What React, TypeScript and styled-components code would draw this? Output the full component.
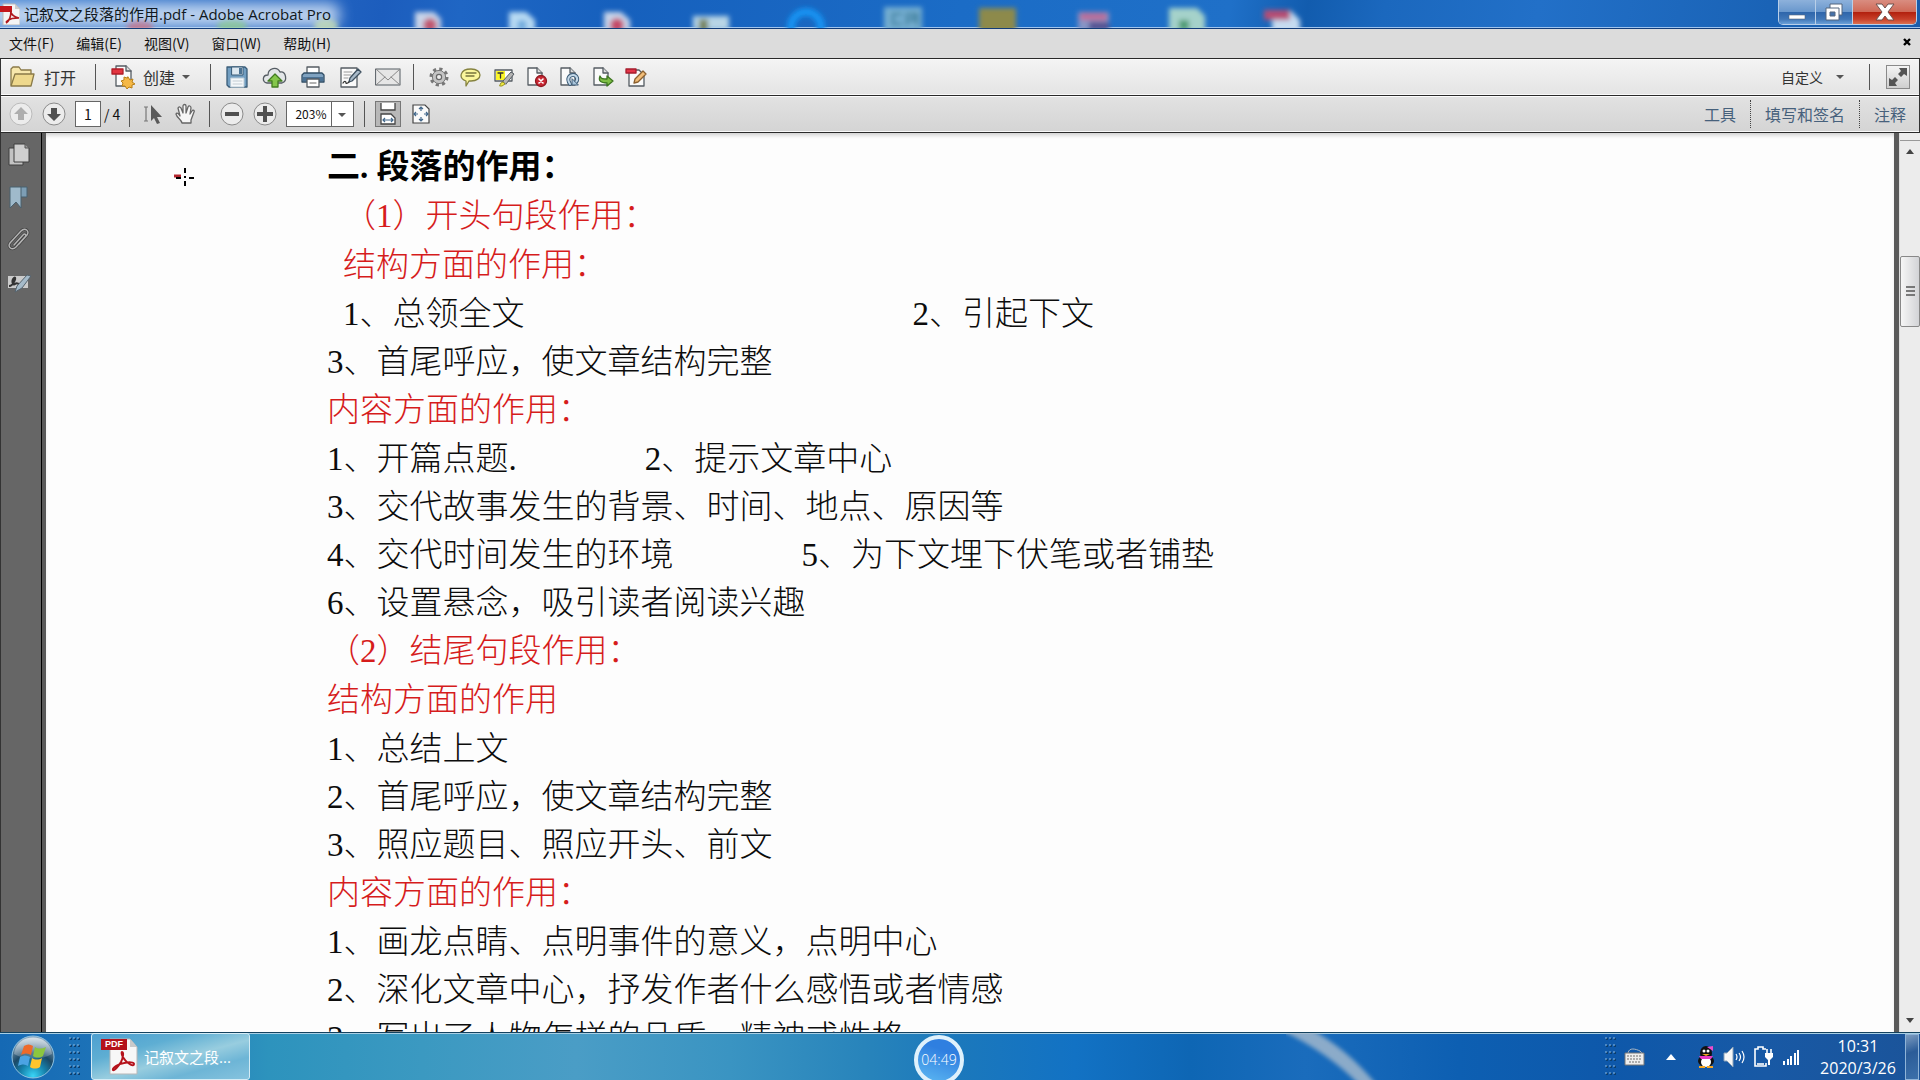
import React from 'react';
import styled, { createGlobalStyle, css } from 'styled-components';

const uiFont = `"Open Sans", "Noto Sans CJK SC", sans-serif`;
const cjkFont = `"Noto Sans CJK SC", sans-serif`;

const GlobalStyle = createGlobalStyle`
  *, *::before, *::after { box-sizing: border-box; }
  body { margin: 0; font-family: ${uiFont}; background: #666; overflow: hidden; }
  button, input, select { font: inherit; color: inherit; margin: 0; padding: 0; border: 0; background: none; }
  h1, h2, p { margin: 0; font-weight: inherit; }
  svg { display: block; flex: none; }
`;

const Desktop = styled.div`
  display: flex;
  flex-direction: column;
  height: 100vh;
`;

/* ---------- title bar ---------- */

const TitleBar = styled.header`
  position: relative;
  display: flex;
  justify-content: space-between;
  height: 29px;
  flex: none;
  overflow: hidden;
  border-bottom: 1px solid #123c78;
  box-shadow: inset 0 -1px 0 #9fc4ee;
  background: linear-gradient(100deg, #3f7fd0 0%, #1c5dbd 20%, #1f66c4 24%, #1660bd 32%, #1b6cc6 50%, #1f70c8 64%, #125cae 68%, #1b68be 72%, #2270c8 80%, #1a63b6 92%, #1a5caa 100%);
`;

const Wallpaper = styled.svg`
  position: absolute;
  left: 0;
  top: 0;
`;

const TitleText = styled.div`
  position: relative;
  display: flex;
  align-items: center;
  gap: 4px;
  height: 28px;
`;

const TitleLabel = styled.h1`
  font-size: 15px;
  line-height: 24px;
  color: #101820;
  white-space: pre;
`;

const WindowButtons = styled.div`
  position: relative;
  display: flex;
  height: 25px;
  margin-right: 3px;
  border: 1px solid #b9cfe8;
  border-top: 0;
  border-radius: 0 0 5px 5px;
  overflow: hidden;
`;

const WindowButton = styled.button<{ $close?: boolean }>`
  display: flex;
  align-items: center;
  justify-content: center;
  width: ${p => (p.$close ? 63 : 37)}px;
  border-right: 1px solid #b9cfe8;
  background: ${p =>
    p.$close
      ? 'linear-gradient(#d98d80 0%, #cf6a58 48%, #b3210f 52%, #c8402a 80%, #dc7050 100%)'
      : 'linear-gradient(#8db1db 0%, #6a98cd 48%, #2f66ab 52%, #4077b8 80%, #6ba0d8 100%)'};
  &:last-child { border-right: 0; }
`;

/* ---------- menu and tool bars ---------- */

const MenuBar = styled.nav`
  display: flex;
  align-items: center;
  height: 30px;
  flex: none;
  padding: 0 8px 2px 9px;
  gap: 22px;
  background: #dcdcdc;
  border-bottom: 1px solid #2a2a2a;
  font-family: ${cjkFont};
  font-size: 14px;
  line-height: 20px;
  color: #111;
`;

const CloseDocument = styled.button`
  margin-left: auto;
`;

const Bar = styled.div<{ $lower?: boolean }>`
  display: flex;
  align-items: center;
  justify-content: space-between;
  height: 37px;
  flex: none;
  border-left: 1px solid #333;
  border-right: 1px solid #333;
  border-bottom: 1px solid #2a2a2a;
  box-shadow: inset 0 1px 0 #fdfdfd, inset 0 -1px 0 #fafafa;
  background: ${p => (p.$lower ? 'linear-gradient(#e2e2e2, #d4d4d4)' : 'linear-gradient(#f4f4f4, #e4e4e4)')};
  font-family: ${cjkFont};
  font-size: 16px;
  line-height: 24px;
  color: #333;
`;

const Group = styled.div<{ $gap?: number; $left?: number; $right?: number }>`
  display: flex;
  align-items: center;
  gap: ${p => p.$gap ?? 0}px;
  padding-left: ${p => p.$left ?? 0}px;
  padding-right: ${p => p.$right ?? 0}px;
`;

const Separator = styled.span`
  width: 1px;
  height: 26px;
  background: #555;
`;

const DottedSeparator = styled.span`
  height: 28px;
  border-left: 1px dotted #444;
`;

const ToolButton = styled.button<{ $gap?: number; $small?: boolean; $boxed?: boolean }>`
  display: flex;
  align-items: center;
  justify-content: center;
  gap: ${p => p.$gap ?? 0}px;
  color: #333;
  ${p => p.$small && css`font-size: 14px;`}
  ${p => p.$boxed && css`
    width: 26px;
    height: 26px;
    background: #b8b8b8;
    border: 1px solid #777;
  `}
`;

const ExpandButton = styled.button`
  display: flex;
  align-items: center;
  justify-content: center;
  width: 24px;
  height: 24px;
  border: 1px solid #8a8a8a;
  background: linear-gradient(#f4f4f4, #cfcfcf);
`;

const PaneLink = styled.a`
  color: #47617c;
  text-decoration: none;
`;

const PageLabel = styled.label`
  display: flex;
  align-items: center;
  gap: 3px;
  font-size: 14px;
  color: #111;
`;

const PageInput = styled.input`
  width: 26px;
  height: 26px;
  border: 1px solid #666;
  background: #fff;
  text-align: center;
`;

const Zoom = styled.span`
  position: relative;
  display: flex;
  width: 68px;
  height: 26px;
  border: 1px solid #666;
  background: #fff;
  & > svg { position: absolute; right: 0; top: 0; pointer-events: none; }
`;

const ZoomSelect = styled.select`
  appearance: none;
  width: 100%;
  padding-left: 8px;
  font-size: 12px;
  color: #111;
`;

/* ---------- document area ---------- */

const Workspace = styled.main`
  display: flex;
  flex: 1;
  min-height: 0;
  background: #5a5a5a;
`;

const SidePanel = styled.aside`
  display: flex;
  flex-direction: column;
  align-items: center;
  gap: 19px;
  width: 42px;
  flex: none;
  padding: 9px 4px 0 0;
  border-left: 1px solid #333;
  border-right: 1px solid #000;
  background: #666;
`;

const Page = styled.article`
  position: relative;
  flex: 1;
  min-width: 0;
  margin: 0 5px 0 4px;
  padding: 10px 0 0 281px;
  overflow: hidden;
  background: #fdfdfd;
  box-shadow: inset 0 4px 4px -2px #ccc;
  font-family: "Liberation Serif", "Noto Sans CJK SC", serif;
  font-size: 33px;
  font-weight: 300;
  color: #0c0c0c;
`;

const Crosshair = styled.svg`
  position: absolute;
  left: 127px;
  top: 34px;
`;

const Line = styled.p<{ $indent?: number }>`
  display: flex;
  gap: 128px;
  line-height: 48px;
  padding-left: ${p => p.$indent ?? 0}px;
  white-space: nowrap;
`;

const WideLine = styled(Line)`
  gap: 388px;
`;

const Heading = styled.h2<{ $indent?: number; $main?: boolean }>`
  font-size: 33px;
  line-height: 49px;
  padding-left: ${p => p.$indent ?? 0}px;
  color: ${p => (p.$main ? '#000' : '#d61c1c')};
  font-weight: ${p => (p.$main ? 700 : 300)};
  white-space: nowrap;
`;

const Scrollbar = styled.div`
  display: flex;
  flex-direction: column;
  width: 21px;
  flex: none;
  background: #ececec;
  border-left: 1px solid #ddd;
`;

const SplitHandle = styled.div`
  height: 8px;
  flex: none;
  border-bottom: 1px solid #999;
`;

const ScrollArrow = styled.button`
  display: flex;
  align-items: center;
  justify-content: center;
  height: 22px;
  flex: none;
`;

const Track = styled.div`
  flex: 1;
  padding-top: 93px;
`;

const Thumb = styled.div`
  display: flex;
  align-items: center;
  justify-content: center;
  height: 71px;
  border: 1px solid #888;
  border-radius: 2px;
  background: linear-gradient(90deg, #f6f6f6, #d2d3d6);
`;

/* ---------- taskbar ---------- */

const Taskbar = styled.footer`
  position: relative;
  display: flex;
  justify-content: space-between;
  height: 48px;
  flex: none;
  border-top: 1px solid #14425f;
  box-shadow: inset 0 1px 0 #a8cfe4;
  color: #fff;
  background: linear-gradient(90deg, #1569b4 0%, #2178ba 8%, #2d93bd 14%, #3b99c1 22%, #4a9dc6 30%, #3a94c2 38%, #2884bb 45%, #1b78bc 50%, #1272c4 56%, #0e66b4 62%, #1a6cbc 68%, #0d5fb2 76%, #0e58aa 84%, #1859a5 92%, #1b549a 100%);
`;

const TaskLeft = styled.div`
  position: relative;
  display: flex;
  align-items: center;
  gap: 14px;
  padding-left: 11px;
`;

const StartButton = styled.button`
  display: flex;
`;

const TaskButton = styled.button`
  display: flex;
  align-items: center;
  gap: 6px;
  width: 159px;
  height: 47px;
  padding-left: 9px;
  margin-left: -4px;
  border: 1px solid #d4ecf6;
  border-radius: 3px;
  background: linear-gradient(165deg, #4d9fd0 0%, #5eaed3 30%, #98cddf 55%, #6db5d6 75%, #86c3de 100%);
  font-size: 15px;
  line-height: 24px;
`;

const Streak = styled.svg`
  position: absolute;
  left: 67%;
  top: 0;
`;

const Timer = styled.div`
  position: absolute;
  left: 50%;
  top: 2px;
  display: flex;
  align-items: center;
  justify-content: center;
  width: 50px;
  height: 50px;
  margin-left: -46px;
  border: 4px solid #dff1fc;
  border-radius: 50%;
  background: linear-gradient(20deg, #5db8f2, #2f7fe0 70%);
  font-size: 14px;
  font-weight: 300;
  line-height: 20px;
`;

const Tray = styled.div`
  position: relative;
  display: flex;
  align-items: center;
`;

const TrayIcons = styled.div`
  display: flex;
  align-items: center;
  gap: 6px;
  padding-left: 7px;
`;

const Clock = styled.time`
  display: flex;
  flex-direction: column;
  align-items: center;
  width: 105px;
  padding-left: 11px;
  font-size: 16px;
  line-height: 22px;
`;

const ShowDesktop = styled.button`
  width: 14px;
  height: 46px;
  margin: 1px 1px 0 0;
  border: 1px solid #8fb4d8;
  background: linear-gradient(160deg, #7d9cc0, #2b5c98 40%, #3c70aa);
`;

/* ---------- drawings ---------- */

const Caret = () => (
  <svg width="8" height="24" viewBox="0 0 8 24"><path d="M0 10h8l-4 4z" fill="#555" /></svg>
);

const outline = { stroke: '#555c63', strokeWidth: 1.3, strokeLinejoin: 'round' as const, strokeLinecap: 'round' as const };

const PdfMini = () => (
  <svg width="20" height="22" viewBox="0 0 20 22">
    <path d="M3 1h12l5 5v16H3z" fill="#f4f4f4" stroke="#b9b9b9" />
    <path d="M15 1v5h5" fill="#ccc" />
    <path d="M0 3h12v6H0z" fill="#c4161c" />
    <path d="M10 7c1 4 3 7 9 8M6 20c3-2 5-7 5-12M6 19c4-4 8-4 13-4" fill="none" stroke="#b0181c" strokeWidth="1.7" />
  </svg>
);

const DesktopIcons = () => (
  <Wallpaper width="1400" height="28" viewBox="0 0 1400 28">
    <defs>
      <filter id="soft" x="-30%" y="-50%" width="160%" height="200%"><feGaussianBlur stdDeviation="2.5" /></filter>
      <filter id="glow" x="-20%" y="-80%" width="140%" height="260%"><feGaussianBlur stdDeviation="7" /></filter>
    </defs>
    <rect x="-10" y="3" width="350" height="24" rx="10" fill="#d5e4f6" opacity=".86" filter="url(#glow)" />
    <g filter="url(#soft)">
      <ellipse cx="140" cy="27" rx="13" ry="6" fill="#d06d80" opacity=".7" />
      <ellipse cx="232" cy="26" rx="15" ry="6" fill="#8fce8c" opacity=".7" />
      <ellipse cx="326" cy="26" rx="12" ry="7" fill="#c6dfb6" opacity=".8" />
      <path d="M415 12h19l7 7v12h-26z" fill="#c9d5ea" /><circle cx="430" cy="25" r="7" fill="#c15670" />
      <path d="M509 12h17l9 8v11h-26z" fill="#b8daf3" /><circle cx="522" cy="25" r="5" fill="#6eabdd" />
      <path d="M604 12h17l9 8v11h-26z" fill="#c9d5ea" /><circle cx="617" cy="25" r="7" fill="#c54a68" />
      <path d="M693 16h36v14h-36z" fill="#b8d5e6" /><path d="M699 19h9v12h-9z" fill="#77845d" />
      <circle cx="806" cy="27" r="15" fill="none" stroke="#1493f2" strokeWidth="8" />
      <path d="M884 7h38v24h-38z" fill="#74aed1" /><path d="M902 14h-9v10h9M907 26V14h7v6h-6M917 12v14" fill="none" stroke="#4a87a6" strokeWidth="3" />
      <path d="M979 8h37v24h-37z" fill="#8d8a4c" />
      <path d="M1078 12h31v19h-31z" fill="#8795c6" /><path d="M1080 13h27v7h-27z" fill="#bb6c98" /><path d="M1089 22h20v8h-20z" fill="#534f90" />
      <path d="M1169 8h28l8 8v16h-36z" fill="#a5d2ca" /><path d="M1179 20h10v10h-10z" fill="#4d9c75" />
      <path d="M1272 10h18l10 10v12h-28z" fill="#c6dcf1" /><path d="M1264 10h26v10h-26z" fill="#b64d74" />
    </g>
  </Wallpaper>
);

const Folder = () => (
  <svg width="26" height="24" viewBox="0 0 26 24" {...outline}>
    <path d="M2 20V4l2-2h6l2 3h10v5" fill="#f7e7ac" stroke="#8a7a48" /><path d="m2 21 4-12h19l-3 12z" fill="#eed88c" stroke="#8a7a48" />
  </svg>
);

const CreatePdf = () => (
  <svg width="26" height="26" viewBox="0 0 26 26" {...outline}>
    <path d="M6 2h10l5 5v15H6z" fill="#fbfbfb" /><path d="M16 2v5h5" fill="#ddd" />
    <path d="M2 5h11v5H2z" fill="#e33440" stroke="#b01d27" />
    <path d="m18 13 2 3 3-1-1 3 3 2-3 1 0 3-3-1-2 2-2-3-3 0 1-3-2-2 3-1 0-3 3 1z" fill="#f5b846" stroke="#b98018" strokeWidth="1" />
  </svg>
);

const Save = () => (
  <svg width="24" height="24" viewBox="0 0 24 24" {...outline}>
    <path d="M2 2h18l2 2v18H4l-2-2z" fill="#729ec1" stroke="#3a5c78" />
    <path d="M7 2h11v8H7z" fill="#dde8f0" stroke="#3a5c78" strokeWidth="1" /><path d="M14 3h3v6h-3z" fill="#4c7291" stroke="none" />
    <path d="M6 13h13v9H6z" fill="#f5f8fa" stroke="#bacbd7" strokeWidth="1" /><path d="M8 16h9M8 19h9" stroke="#c3ccd3" strokeWidth="1" />
  </svg>
);

const Cloud = () => (
  <svg width="26" height="24" viewBox="0 0 26 24" {...outline}>
    <path d="M7 18H5c-5-1-5-8 1-8 0-7 9-9 12-3 6-1 8 9 2 11z" fill="#e3e6e8" /><path d="m13 9 7 7h-4v6h-6v-6H6z" fill="#84c64b" stroke="#417c20" />
  </svg>
);

const Printer = () => (
  <svg width="24" height="24" viewBox="0 0 24 24" {...outline}>
    <path d="M6 2h12v8H6z" fill="#fff" /><path d="M3 8h18l2 2v7H1v-7z" fill="#7fa2c0" stroke="#304d65" /><path d="M2 12h20v4H2z" fill="#4a7194" stroke="none" />
    <path d="M6 14h12v8H6z" fill="#fff" /><path d="M9 18h6" stroke="#999" />
  </svg>
);

const SignDoc = () => (
  <svg width="24" height="24" viewBox="0 0 24 24" {...outline}>
    <path d="M3 3h16v19H3z" fill="#fafafa" /><path d="M6 7h8M6 10h7M6 13h4" stroke="#999" strokeWidth="1" />
    <path d="m11 17 1-4 8-9 3 3-9 9z" fill="#a9bac9" stroke="#3f5160" /><path d="M5 18c2-3 3-1 3 0s2 0 3-1" fill="none" stroke="#333" />
  </svg>
);

const Mail = () => (
  <svg width="26" height="24" viewBox="0 0 26 24" {...outline} strokeWidth="1">
    <path d="M1 4h24v16H1z" fill="#e6e6e6" /><path d="m1 4 12 11L25 4M1 20l9-8M25 20l-9-8" fill="none" stroke="#888" />
  </svg>
);

const Gear = () => (
  <svg width="20" height="20" viewBox="0 0 20 20">
    <circle cx="10" cy="10" r="8" fill="none" stroke="#777" strokeWidth="3" strokeDasharray="3.2 3.08" />
    <circle cx="10" cy="10" r="6.6" fill="#c4c4c4" stroke="#777" /><circle cx="10" cy="10" r="2.6" fill="#ededed" stroke="#686868" strokeWidth="1.2" />
  </svg>
);

const Comment = () => (
  <svg width="22" height="20" viewBox="0 0 22 20" {...outline}>
    <path d="M11 2c12 0 12 12 0 12H9l-3 5v-5C-2 11 0 2 11 2z" fill="#fbf79c" stroke="#85823f" /><path d="M6 6h10M6 9h8" stroke="#77743c" />
  </svg>
);

const Highlight = () => (
  <svg width="22" height="20" viewBox="0 0 22 20" {...outline}>
    <path d="M2 3h17v11H2z" fill="#fff" /><path d="M3 4h9v9H3z" fill="#fbf62b" stroke="none" /><path d="M5 6h5M7.500 6v5" stroke="#333" />
    <path d="m10 14 8-9 3 2-8 10z" fill="#b5b5b5" strokeWidth="1" /><path d="m8 16 2-1 2 2-3 2H7z" fill="#eee840" stroke="#999420" strokeWidth="1" />
  </svg>
);

const PageShape = () => (<><path d="M2 2h9l5 5v12H2z" fill="#fafafa" /><path d="M11 2v5h5" fill="#ddd" /></>);

const DeletePage = () => (
  <svg width="22" height="22" viewBox="0 0 22 22" {...outline}>
    <PageShape /><circle cx="15" cy="15" r="5.500" fill="#ca2733" stroke="#8d1921" /><path d="m13 13 4 4m0-4-4 4" stroke="#fff" strokeWidth="1.6" />
  </svg>
);

const RotatePage = () => (
  <svg width="22" height="22" viewBox="0 0 22 22" {...outline}>
    <PageShape />
    <path d="M11 18c-4-6 0-9 3-9 4 0 6 5 2 8" fill="none" stroke="#3e5d78" strokeWidth="4" />
    <path d="M11 18c-4-6 0-9 3-9 4 0 6 5 2 8" fill="none" stroke="#c3d8e8" strokeWidth="2" />
    <path d="M13 13v6h6z" fill="#a9c5db" stroke="#3e5d78" strokeWidth="1" />
  </svg>
);

const ExtractPage = () => (
  <svg width="22" height="22" viewBox="0 0 22 22" {...outline}>
    <PageShape /><path d="M8 10c1 3 3 3 7 3v-3l6 5-6 5v-3c-6 0-9-2-7-7z" fill="#7fbf45" stroke="#3c7420" />
  </svg>
);

const EditPdf = () => (
  <svg width="22" height="22" viewBox="0 0 22 22" {...outline}>
    <path d="M4 4h10l5 5v11H4z" fill="#fafafa" /><path d="M1 3h10v4H1z" fill="#e33548" stroke="#a71d2c" /><path d="m9 17 1-4 8-8 3 3-8 8z" fill="#f1bd78" stroke="#8b602f" />
  </svg>
);

const RoundButtonArt = ({ d, faded }: { d: string; faded?: boolean }) => (
  <svg width="24" height="24" viewBox="0 0 24 24">
    <circle cx="12" cy="12" r="11" fill="#ececec" stroke={faded ? '#bbb' : '#8a8a8a'} /><path d={d} fill={faded ? '#aeaeae' : '#505050'} />
  </svg>
);

const SelectTool = () => (
  <svg width="20" height="22" viewBox="0 0 20 22">
    <path d="M1 4h4M1 18h4M3 4v14" stroke="#777" strokeWidth="1.200" /><path d="M8 2v16l3-3 3 6 3-1-3-6h5z" fill="#5a5a5a" />
  </svg>
);

const HandTool = () => (
  <svg width="22" height="22" viewBox="0 0 22 22">
    <path d="M8 20c-1-4-5-5-6-9 1-2 3 0 4 2L4 5c1-2 2-1 3 0l2 5V3c0-2 3-2 3 0v7l2-6c1-2 3-1 3 1l-1 6 2-3c1-2 3 0 2 1l-3 8v3z" fill="#f6f6f6" stroke="#666" strokeWidth="1.300" strokeLinejoin="round" />
  </svg>
);

const FitWidth = () => (
  <svg width="20" height="22" viewBox="0 0 20 22">
    <path d="M3 0v7h14V0z" fill="#fff" /><path d="M3 0v7h14V0" fill="none" stroke="#444" strokeWidth="1.300" />
    <path d="M3 21V11h10l4 4v6z" fill="#fff" stroke="#444" strokeWidth="1.300" />
    <path d="M5 17h10M7 15l-2 2 2 2M13 15l2 2-2 2" fill="none" stroke="#40668a" strokeWidth="1.200" />
  </svg>
);

const FitPage = () => (
  <svg width="20" height="22" viewBox="0 0 20 22">
    <path d="M2 2h12l4 4v14H2z" fill="#fafafa" stroke="#444" strokeWidth="1.200" />
    <path d="M10 4v4M10 14v4M3 11h4M13 11h4M8 6l2-2 2 2M8 16l2 2 2-2M5 9l-2 2 2 2M15 9l2 2-2 2" fill="none" stroke="#40668a" strokeWidth="1.200" />
  </svg>
);

const Thumbnails = () => (
  <svg width="24" height="24" viewBox="0 0 24 24"><path d="M2 6h14v17H2z" fill="#c3c3c3" stroke="#3f3f3f" /><path d="M7 2h11l4 4v14H7z" fill="#cfcfcf" stroke="#3f3f3f" /><path d="M18 2v4h4" fill="#9a9a9a" stroke="#555" /></svg>
);

const Bookmark = () => (
  <svg width="24" height="24" viewBox="0 0 24 24"><path d="M13 2h7v10h-7z" fill="#7d9eb5" stroke="#49606f" /><path d="M3 2h11v21l-5-6-6 6z" fill="#9fbacb" stroke="#49606f" /></svg>
);

const Paperclip = () => (
  <svg width="24" height="24" viewBox="0 0 24 24" fill="none" strokeLinecap="round">
    <path d="m7 17 9-10c2-2 4 0 2 2L9 19c-4 4-9 0-6-4L14 3c4-4 9 0 6 4l-8 9" stroke="#444" strokeWidth="3" /><path d="m7 17 9-10c2-2 4 0 2 2L9 19c-4 4-9 0-6-4L14 3c4-4 9 0 6 4l-8 9" stroke="#b4b4b4" strokeWidth="1.400" />
  </svg>
);

const Signatures = () => (
  <svg width="24" height="24" viewBox="0 0 24 24"><path d="M1 5h20v12H1z" fill="#cbcbcb" /><path d="M2 15c5 0 8-11 5-8s-1 8 1 6 3 0 4 0" fill="none" stroke="#333" strokeWidth="2" /><path d="m8 21 2-6L20 4l4 1-9 12z" fill="#a5bac9" stroke="#55636e" /></svg>
);

const StartOrb = () => (
  <svg width="44" height="44" viewBox="0 0 44 44">
    <defs>
      <radialGradient id="orb" cx="50%" cy="95%" r="90%"><stop offset="0" stopColor="#39d5f7" /><stop offset=".35" stopColor="#157fa9" /><stop offset=".6" stopColor="#1b4866" /><stop offset="1" stopColor="#8ca8bd" /></radialGradient>
      <linearGradient id="shine" x2="0" y2="1"><stop offset="0" stopColor="#fff" stopOpacity=".65" /><stop offset="1" stopColor="#fff" stopOpacity=".15" /></linearGradient>
    </defs>
    <circle cx="22" cy="22" r="21" fill="url(#orb)" stroke="#8fc1df" />
    <path d="M3 19C5-3 39-3 41 19c-10 6-28 6-38 0z" fill="url(#shine)" />
    <path d="M13 11c3-2 6-2 9 0l-2 9c-3-2-6-2-10 0z" fill="#ee6a2a" /><path d="M24 12c3 2 7 2 11 0l-3 9c-3 2-7 2-10 0z" fill="#8cc63f" />
    <path d="M9 22c4-2 7-2 10 0l-2 9c-3-2-6-2-10 0z" fill="#4ba3e3" /><path d="M21 23c3 2 7 2 10 0l-2 9c-3 2-7 2-10 0z" fill="#fdc52e" />
  </svg>
);

const Grip = () => (
  <svg width="12" height="40" viewBox="0 0 12 40">
    {[1, 8, 15, 22, 29, 36].map(y => (
      <g key={y}><path d={`M1 ${y + 1}h2m2 0h2m2 0h2`} stroke="#0b3f70" strokeWidth="2" /><path d={`M0 ${y}h2m2 0h2m2 0h2`} stroke="#8dbadf" /></g>
    ))}
  </svg>
);

const PdfBadge = styled.span`
  position: relative;
  display: block;
  width: 37px;
  height: 37px;
  & > b {
    position: absolute;
    left: 0;
    top: 1px;
    width: 26px;
    text-align: center;
    font: 700 9px/11px "Liberation Sans", sans-serif;
    background: #b5121b;
    color: #fff;
  }
`;

const PdfLarge = () => (
  <svg width="37" height="37" viewBox="0 0 37 37">
    <path d="M9 1h20l7 8v27H9z" fill="#f7f7f7" stroke="#b7b7b7" /><path d="M29 1v8h7z" fill="#c9c9c9" />
    <path d="M21 14c2 0 1 6-1 10-3 5-7 9-8 8-1-2 5-6 11-7 5-1 10-1 10 1 0 3-6 0-9-4-3-3-4-8-3-8z" fill="none" stroke="#b5121b" strokeWidth="2" />
  </svg>
);

const Keyboard = () => (
  <svg width="22" height="20" viewBox="0 0 22 20"><path d="M4 6c1-6 8-4 12-2l2 2" fill="none" stroke="#aab6c2" /><path d="M1 6h19v12H1z" fill="#eee" stroke="#777" /><path d="M3 9h15M3 12h15M5 15h11" stroke="#999" strokeWidth="1.600" strokeDasharray="2 1" /></svg>
);

const Penguin = () => (
  <svg width="20" height="24" viewBox="0 0 20 24">
    <ellipse cx="10" cy="8" rx="6" ry="7" fill="#111" /><ellipse cx="10" cy="16" rx="8" ry="6" fill="#111" /><ellipse cx="10" cy="17" rx="5" ry="5" fill="#fff" />
    <path d="M3 11h14l-2 3H5z" fill="#e83ac4" /><path d="m11 2 6-1v5z" fill="#ec4ccb" /><circle cx="8" cy="6" r="1.500" fill="#fff" /><circle cx="12" cy="6" r="1.500" fill="#fff" /><path d="M6 9h8l-4 2zM3 21h6v2H3zM11 21h6v2h-6z" fill="#f5a623" />
  </svg>
);

const Speaker = () => (
  <svg width="24" height="24" viewBox="0 0 24 24"><path d="M2 8h3l6-6v20l-6-6H2z" fill="#f7f7f7" stroke="#8ca3b9" /><path d="M14 9q2 3 0 6M17 8q3 4 0 8M20 6q4 6 0 12" fill="none" stroke="#fff" strokeWidth="1.200" /></svg>
);

const Battery = () => (
  <svg width="24" height="24" viewBox="0 0 24 24">
    <path d="M14 4h-3V2H6v2H3v17h11v-3" fill="none" stroke="#fff" strokeWidth="1.600" /><path d="M5 19h7" stroke="#fff" strokeWidth="1.600" />
    <path d="M15 4v4M19 4v4" stroke="#fff" strokeWidth="1.600" /><path d="M13 8h8v4l-3 3v5h-2v-5l-3-3z" fill="#fff" />
  </svg>
);

const Signal = () => (
  <svg width="18" height="18" viewBox="0 0 18 18"><path d="M1 13h2v4H1zM5 11h2v6H5zM8 8h2v9H8zM12 5h2v12h-2zM15 2h2v15h-2z" fill="#fff" /></svg>
);

/* ---------- app ---------- */

const menus = ['文件(F)', '编辑(E)', '视图(V)', '窗口(W)', '帮助(H)'];

const fileTools: [string, React.FC][] = [['保存', Save], ['上传', Cloud], ['打印', Printer], ['签名', SignDoc], ['邮件', Mail]];
const editTools: [string, React.FC][] = [['设置', Gear], ['批注', Comment], ['高亮', Highlight], ['删除页面', DeletePage], ['旋转页面', RotatePage], ['提取页面', ExtractPage], ['编辑 PDF', EditPdf]];
const panels: [string, React.FC][] = [['页面缩略图', Thumbnails], ['书签', Bookmark], ['附件', Paperclip], ['签名', Signatures]];

export default function App() {
  return (
    <Desktop lang="zh-CN">
      <GlobalStyle />
      <TitleBar>
        <DesktopIcons />
        <TitleText><PdfMini /><TitleLabel>记叙文之段落的作用.pdf - Adobe Acrobat Pro</TitleLabel></TitleText>
        <WindowButtons>
          <WindowButton aria-label="最小化"><svg width="18" height="18"><path d="M1 12h16v4H1z" fill="#fff" stroke="#54677e" strokeWidth=".6" /></svg></WindowButton>
          <WindowButton aria-label="还原"><svg width="20" height="20"><path d="M6 2h12v11H6z" fill="#fff" stroke="#54677e" /><path d="M2 6h13v12H2z" fill="#fff" stroke="#54677e" /><path d="M6 10h5v4H6z" fill="#4572ab" stroke="#54677e" /></svg></WindowButton>
          <WindowButton aria-label="关闭" $close><svg width="20" height="18"><path d="M1 1h6l3 4 3-4h6l-6 8 6 8h-6l-3-4-3 4H1l6-8z" fill="#fff" stroke="#6e504d" /></svg></WindowButton>
        </WindowButtons>
      </TitleBar>

      <MenuBar>
        {menus.map(m => <button key={m}>{m}</button>)}
        <CloseDocument aria-label="关闭文档"><svg width="9" height="9"><path d="m1 1 6 6m0-6-6 6" stroke="#000" strokeWidth="2.400" /></svg></CloseDocument>
      </MenuBar>

      <Bar>
        <Group $left={8}>
          <ToolButton $gap={9}><Folder />打开</ToolButton>
          <Group $left={19} $right={14}><Separator /></Group>
          <ToolButton $gap={7}><CreatePdf />创建<Caret /></ToolButton>
          <Group $left={20} $right={14}><Separator /></Group>
          <Group $gap={13}>
            {fileTools.map(([name, Icon]) => <ToolButton key={name} aria-label={name}><Icon /></ToolButton>)}
          </Group>
          <Group $left={12} $right={15}><Separator /></Group>
          <Group $gap={11}>
            {editTools.map(([name, Icon]) => <ToolButton key={name} aria-label={name}><Icon /></ToolButton>)}
          </Group>
        </Group>
        <Group $right={9}>
          <ToolButton $gap={13} $small>自定义<Caret /></ToolButton>
          <Group $left={25} $right={16}><Separator /></Group>
          <ExpandButton aria-label="全屏"><svg width="20" height="20"><path d="M19 1v8l-3-2-3 3-3-3 3-3-2-3zM1 19v-8l3 2 3-3 3 3-3 3 2 3z" fill="#555" /></svg></ExpandButton>
        </Group>
      </Bar>

      <Bar $lower>
        <Group $left={8}>
          <Group $gap={9}>
            <ToolButton aria-label="上一页"><RoundButtonArt faded d="m12 5 7 7h-4v6H9v-6H5z" /></ToolButton>
            <ToolButton aria-label="下一页"><RoundButtonArt d="m12 19 7-7h-4V6H9v6H5z" /></ToolButton>
            <PageLabel><PageInput aria-label="页码" defaultValue="1" />/ 4</PageLabel>
          </Group>
          <Group $left={9} $right={13}><Separator /></Group>
          <Group $gap={11}>
            <ToolButton aria-label="选择"><SelectTool /></ToolButton>
            <ToolButton aria-label="手形"><HandTool /></ToolButton>
          </Group>
          <Group $left={13} $right={10}><Separator /></Group>
          <Group $gap={9}>
            <ToolButton aria-label="缩小"><RoundButtonArt d="M5 10h14v4H5z" /></ToolButton>
            <ToolButton aria-label="放大"><RoundButtonArt d="M10 4h4v6h6v4h-6v6h-4v-6H4v-4h6z" /></ToolButton>
            <Zoom>
              <ZoomSelect aria-label="缩放比例"><option>203%</option></ZoomSelect>
              <svg width="22" height="24"><path d="M0 0v24" stroke="#666" strokeWidth="2" /><path d="M7 11h8l-4 4z" fill="#555" /></svg>
            </Zoom>
          </Group>
          <Group $left={10} $right={10}><Separator /></Group>
          <Group $gap={10}>
            <ToolButton $boxed aria-label="适合宽度"><FitWidth /></ToolButton>
            <ToolButton aria-label="适合页面"><FitPage /></ToolButton>
          </Group>
        </Group>
        <Group $gap={14} $right={13}>
          <PaneLink href="#tools">工具</PaneLink>
          <DottedSeparator />
          <PaneLink href="#sign">填写和签名</PaneLink>
          <DottedSeparator />
          <PaneLink href="#comment">注释</PaneLink>
        </Group>
      </Bar>

      <Workspace>
        <SidePanel>
          {panels.map(([name, Icon]) => <ToolButton key={name} aria-label={name}><Icon /></ToolButton>)}
        </SidePanel>
        <Page>
          <Heading $main>二. 段落的作用：</Heading>
          <Heading $indent={16}>（1）开头句段作用：</Heading>
          <Heading $indent={16}>结构方面的作用：</Heading>
          <WideLine $indent={16}><span>1、总领全文</span><span>2、引起下文</span></WideLine>
          <Line>3、首尾呼应，使文章结构完整</Line>
          <Heading>内容方面的作用：</Heading>
          <Line><span>1、开篇点题.</span><span>2、提示文章中心</span></Line>
          <Line>3、交代故事发生的背景、时间、地点、原因等</Line>
          <Line><span>4、交代时间发生的环境</span><span>5、为下文埋下伏笔或者铺垫</span></Line>
          <Line>6、设置悬念，吸引读者阅读兴趣</Line>
          <Heading>（2）结尾句段作用：</Heading>
          <Heading>结构方面的作用</Heading>
          <Line>1、总结上文</Line>
          <Line>2、首尾呼应，使文章结构完整</Line>
          <Line>3、照应题目、照应开头、前文</Line>
          <Heading>内容方面的作用：</Heading>
          <Line>1、画龙点睛、点明事件的意义，点明中心</Line>
          <Line>2、深化文章中心，抒发作者什么感悟或者情感</Line>
          <Line>3、写出了人物怎样的品质、精神或性格</Line>
          <Crosshair width="24" height="20" viewBox="0 0 24 20">
            <path d="M1 9h7" stroke="#b3242c" strokeWidth="3" /><path d="M3 11h5M16 11h5M12 1v5M12 14v5M11 10h2" stroke="#000" strokeWidth="2" />
          </Crosshair>
        </Page>
        <Scrollbar>
          <SplitHandle />
          <ScrollArrow aria-label="向上滚动"><svg width="10" height="6"><path d="m5 0 4 5H1z" fill="#444" /></svg></ScrollArrow>
          <Track><Thumb><svg width="9" height="11"><path d="M0 1h9M0 5h9M0 9h9" stroke="#555" strokeWidth="1.500" /></svg></Thumb></Track>
          <ScrollArrow aria-label="向下滚动"><svg width="10" height="6"><path d="m5 5 4-5H1z" fill="#444" /></svg></ScrollArrow>
        </Scrollbar>
      </Workspace>

      <Taskbar>
        <Streak width="140" height="47" viewBox="0 0 140 48">
          <defs><filter id="haze"><feGaussianBlur stdDeviation="2" /></filter></defs>
          <path d="M-28-12Q38 14 78 58h17Q60 12 8-12z" fill="#a9bccd" opacity=".8" filter="url(#haze)" />
        </Streak>
        <TaskLeft>
          <StartButton aria-label="开始"><StartOrb /></StartButton>
          <Grip />
          <TaskButton><PdfBadge><PdfLarge /><b>PDF</b></PdfBadge>记叙文之段...</TaskButton>
        </TaskLeft>
        <Timer>04:49</Timer>
        <Tray>
          <Grip />
          <TrayIcons>
            <Keyboard />
            <svg width="38" height="20" viewBox="0 0 38 20"><path d="m19 7 5 6H14z" fill="#fff" /></svg>
            <Penguin />
            <Speaker />
            <Battery />
            <Signal />
          </TrayIcons>
          <Clock><span>10:31</span><span>2020/3/26</span></Clock>
          <ShowDesktop aria-label="显示桌面" />
        </Tray>
      </Taskbar>
    </Desktop>
  );
}
